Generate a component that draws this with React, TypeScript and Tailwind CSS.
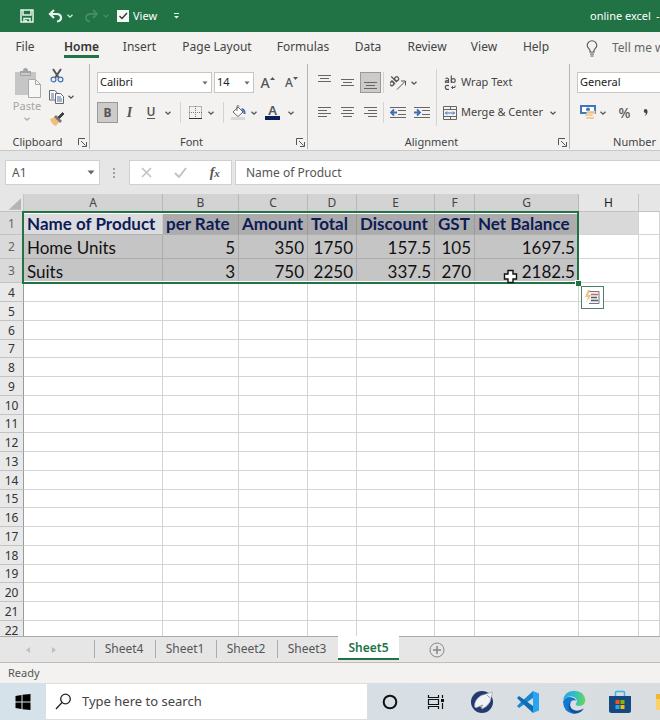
import type { ReactNode } from "react";
import clsx from "clsx";

const TABS = [
  { label: "File", box: "w-[50px]" },
  { label: "Home", box: "w-[63px]" },
  { label: "Insert", box: "w-[53px]" },
  { label: "Page Layout", box: "w-[102px]" },
  { label: "Formulas", box: "w-[70px]" },
  { label: "Data", box: "w-[60px]" },
  { label: "Review", box: "w-[58px]" },
  { label: "View", box: "w-[56px]" },
  { label: "Help", box: "w-[48px]" },
];

const COLUMNS = [
  { name: "A", width: "w-[139px]" },
  { name: "B", width: "w-[76px]" },
  { name: "C", width: "w-[69px]" },
  { name: "D", width: "w-[49px]" },
  { name: "E", width: "w-[78px]" },
  { name: "F", width: "w-[40px]" },
  { name: "G", width: "w-[104px]" },
];

const HEADINGS = ["Name of Product", "per Rate", "Amount", "Total", "Discount", "GST", "Net Balance"];

const PRODUCTS = [
  ["Home Units", "5", "350", "1750", "157.5", "105", "1697.5"],
  ["Suits", "3", "750", "2250", "337.5", "270", "2182.5"],
];

const EMPTY_ROWS = Array.from({ length: 19 }, (_, i) => i + 4);

const SHEETS = ["Sheet4", "Sheet1", "Sheet2", "Sheet3", "Sheet5"];

const ROW_HEAD =
  "border-r border-b border-r-[#9b9b9b] border-b-[#c3c3c3] px-0 pt-px pb-0 text-center font-['Noto_Sans',sans-serif] text-[12px] leading-[14px] font-normal";
const EMPTY_CELL = "border-r border-b border-[#d4d4d4] p-0";

function Chevron({ className = "text-[#555]" }: { className?: string }) {
  return (
    <svg viewBox="0 0 14 8" className={clsx("h-2 w-[14px] shrink-0", className)} fill="none" stroke="currentColor" strokeWidth="1.3">
      <path d="M4.5 2.7 7 5.2l2.5-2.5" />
    </svg>
  );
}

function Lines({ rows }: { rows: [number, number, number][] }) {
  return (
    <svg viewBox="0 0 15 15" className="size-[15px]" stroke="#666" strokeWidth="1">
      {rows.map(([x1, x2, y]) => (
        <path key={y} d={`M${x1} ${y}H${x2}`} />
      ))}
    </svg>
  );
}

function IconButton({ label, active, className = "w-[21px]", children }: { label: string; active?: boolean; className?: string; children: ReactNode }) {
  return (
    <button
      type="button"
      aria-label={label}
      className={clsx(
        "flex h-[21px] shrink-0 items-center justify-center",
        active && "border border-[#999] bg-[#cdcbca]",
        className,
      )}
    >
      {children}
    </button>
  );
}

function Group({ label, launcher = true, className, children }: { label: string; launcher?: boolean; className: string; children: ReactNode }) {
  return (
    <section className={clsx("flex h-[85px] shrink-0 flex-col justify-between border-r border-[#b5b5b5] pt-px", className)}>
      {children}
      <div className="flex h-[14px] items-center">
        <span className="flex-1 text-center text-[11px] leading-[14px]">{label}</span>
        {launcher && (
          <button type="button" aria-label={`${label} settings`} className="flex w-[14px] justify-center">
            <svg viewBox="0 0 9 9" className="size-[9px]" fill="none" stroke="#555">
              <path d="M.5 7V.5H7M3 3l4.500 4.500M8.500 4v4.500H4" />
            </svg>
          </button>
        )}
      </div>
    </section>
  );
}

function Separator() {
  return <span className="block h-[21px] w-px shrink-0 bg-[#d5d3d2]" />;
}

function TitleBar() {
  return (
    <header className="flex h-8 shrink-0 items-center overflow-hidden bg-[#217346] text-[11px] text-white">
      <div className="flex w-[590px] shrink-0 items-center pl-5">
        <button type="button" aria-label="Save" className="w-[28px]">
          <svg viewBox="0 0 14 14" className="size-[14px]" fill="none" stroke="#e8f4ec" strokeWidth="1.500">
            <path d="M1 1h12v12H1zM3 1.500v4.500h8V1.500M4 13V9.500h6V13" />
            <path d="M5 11h2v2H5z" fill="#e8f4ec" stroke="none" />
          </svg>
        </button>
        <button type="button" aria-label="Undo" className="flex w-[36px] items-center">
          <svg viewBox="0 0 15 14" className="h-[14px] w-[15px]" fill="none" stroke="#e8f4ec" strokeWidth="2.200">
            <path d="M6 1 2 5l4 4M2 5h6.500Q13 5 13 8.700 13 12 9 12.500" />
          </svg>
          <Chevron className="text-[#d4e8da]" />
        </button>
        <button type="button" aria-label="Redo" disabled className="flex w-[33px] items-center text-[#458b65]">
          <svg viewBox="0 0 15 14" className="h-[14px] w-[15px]" fill="none" stroke="currentColor" strokeWidth="1.800">
            <path d="m9 1 4 4-4 4M13 5H6.500Q2 5 2 8.700 2 12 6 12.500" />
          </svg>
          <Chevron className="text-[#458b65]" />
        </button>
        <label className="relative flex items-center gap-1">
          <input type="checkbox" defaultChecked className="size-3 appearance-none bg-[#f3faf5]" />
          <svg viewBox="0 0 12 12" className="pointer-events-none absolute left-0 size-3" fill="none" stroke="#333" strokeWidth="1.300">
            <path d="m2.500 6 2.500 2.500 5-5.500" />
          </svg>
          <span>View</span>
        </label>
        <button type="button" aria-label="Customize Quick Access Toolbar" className="ml-4">
          <svg viewBox="0 0 7 8" className="h-2 w-[7px]" fill="#e8f4ec">
            <path d="M1 1h5v1H1zM1 4h5L3.500 6.500z" />
          </svg>
        </button>
      </div>
      <span className="flex gap-[5px] whitespace-nowrap"><span>online excel</span><span>-</span></span>
    </header>
  );
}

function RibbonTabs() {
  return (
    <nav className="flex h-8 shrink-0 items-center overflow-hidden text-[12px] text-[#444]">
      {TABS.map((tab) => (
        <a key={tab.label} href="#" className={clsx("flex h-full shrink-0 flex-col items-center pt-[6px]", tab.box)}>
          <span
            className={clsx(
              "border-b-[3px] leading-[17px]",
              tab.label === "Home" ? "border-[#217346] font-semibold text-[#333]" : "border-transparent",
            )}
          >
            {tab.label}
          </span>
        </a>
      ))}
      <label className="flex shrink-0 items-center pl-[26px]">
        <svg viewBox="0 0 12 17" className="h-[17px] w-3" fill="none" stroke="#555" strokeWidth="1.100">
          <path d="M4 12V10.500C4 9 1.200 8 1.200 5.500a4.800 4.800 0 0 1 9.600 0C10.800 8 8 9 8 10.500V12zM4 14h4M4.500 16h3" />
        </svg>
        <input
          aria-label="Tell me what you want to do"
          placeholder="Tell me what you want to do"
          className="ml-[14px] w-[200px] bg-transparent text-[12px] placeholder-[#666] outline-none"
        />
      </label>
    </nav>
  );
}

function Dropdown({ label, value, className }: { label: string; value: string; className: string }) {
  return (
    <span className={clsx("relative flex h-[21px] shrink-0 items-center", className)}>
      <select aria-label={label} className="size-full appearance-none border border-[#c8c6c4] bg-white pl-[2px] text-[11px] text-[#222]">
        <option>{value}</option>
      </select>
      <svg viewBox="0 0 6 4" className="pointer-events-none absolute right-1 h-1 w-[6px]" fill="#666">
        <path d="M.500.500h5L3 3.500z" />
      </svg>
    </span>
  );
}

function ClipboardGroup() {
  return (
    <Group label="Clipboard" className="w-[90px]">
      <div className="flex pl-[12px]">
        <button type="button" disabled className="flex w-[30px] flex-col items-center pt-[3px] text-[11px] text-[#a5a5a5]">
          <svg viewBox="0 0 27 30" className="h-[30px] w-[27px]">
            <path d="M1 4h21v23H1z" fill="#c6c6c6" />
            <path d="M6 8V3h3Q9 0 11.500 0T14 3h3v5z" fill="#a5a5a5" />
            <path d="M7 6h9" stroke="#eee" />
            <path d="M14.500 11.500h7l5 5v13h-12z" fill="#f7f7f7" stroke="#aaa" />
            <path d="M21.500 11.500v5h5" fill="none" stroke="#aaa" />
          </svg>
          <span className="leading-[15px]">Paste</span>
          <span className="pt-[2px]"><Chevron className="text-[#aaa]" /></span>
        </button>
        <div className="flex flex-col pl-[6px]">
          <IconButton label="Cut" className="w-[18px]">
            <svg viewBox="0 0 14 15" className="h-[15px] w-[14px]" fill="none">
              <path d="M3 1 9 10M11 1 5 10" stroke="#555" strokeWidth="2" />
              <circle cx="3.500" cy="11.500" r="2.400" stroke="#4472b8" strokeWidth="1.200" />
              <circle cx="10.500" cy="11.500" r="2.400" stroke="#4472b8" strokeWidth="1.200" />
            </svg>
          </IconButton>
          <button type="button" aria-label="Copy" className="flex h-[22px] items-center pl-px">
            <svg viewBox="0 0 15 14" className="h-[14px] w-[15px]" fill="#fafafa" stroke="#666">
              <path d="M.500.500h5l2.500 2v7.500H.500z" />
              <path d="M2 4h3M2 6h3M2 8h3" stroke="#4472b8" />
              <path d="M6.500 3.500h5l3 3v7h-8z" />
              <path d="M8 7h4M8 9h5M8 11h5" stroke="#4472b8" />
            </svg>
            <Chevron />
          </button>
          <IconButton label="Format Painter" className="w-[18px]">
            <svg viewBox="0 0 14 14" className="size-[14px]">
              <path d="m0 7 5-2 4 5-3 4q-4-1-6-7z" fill="#f0bd7c" />
              <path d="m4 5 2-2 6 6-2 2z" fill="#777" />
              <path d="m8 5 4.500-4.500 1.500 1.500L9.500 6.500z" fill="#444" stroke="#444" />
            </svg>
          </IconButton>
        </div>
      </div>
    </Group>
  );
}

function FontGroup() {
  return (
    <Group label="Font" className="w-[218px]">
      <div className="flex flex-col gap-[9px] pt-[7px] pl-[7px]">
        <div className="flex gap-[2px]">
          <Dropdown label="Font" value="Calibri" className="w-[115px]" />
          <Dropdown label="Font size" value="14" className="w-[40px]" />
          <IconButton label="Increase Font Size" className="w-[23px]">
            <span className="text-[14px] font-medium text-[#555]">A</span>
            <svg viewBox="0 0 5 12" className="h-3 w-[5px]" fill="#555"><path d="M0 3 2.500 0 5 3z" /></svg>
          </IconButton>
          <IconButton label="Decrease Font Size">
            <span className="text-[12px] font-medium text-[#555]">A</span>
            <svg viewBox="0 0 5 12" className="h-3 w-[5px]" fill="#555"><path d="M0 0h5L2.500 3z" /></svg>
          </IconButton>
        </div>
        <div className="flex items-center text-[#555]">
          <IconButton label="Bold" active><b className="text-[12px]">B</b></IconButton>
          <IconButton label="Italic" className="w-[23px]">
            <i className="font-['Liberation_Serif',serif] text-[14px] font-bold">I</i>
          </IconButton>
          <IconButton label="Underline" className="w-[20px]"><span className="border-b border-[#555] text-[12px] leading-[12px] font-semibold">U</span></IconButton>
          <Chevron />
          <span className="pr-[6px] pl-[5px]"><Separator /></span>
          <IconButton label="Borders" className="w-[17px]">
            <svg viewBox="0 0 13 13" className="size-[13px]" fill="none" stroke="#777">
              <path d="M.500.500h12v12M.500.500v12M6.500 0v12M0 6.500h13" strokeDasharray="1 1" />
              <path d="M0 12.500h13" stroke="#333" />
            </svg>
          </IconButton>
          <Chevron />
          <span className="pr-[6px] pl-[5px]"><Separator /></span>
          <IconButton label="Fill Color" className="w-[17px]">
            <svg viewBox="0 0 15 15" className="size-[15px]" fill="none" stroke="#666">
              <path d="m2 7 5-5 5 5-5 4.500zM6 6V1.500Q6 .500 7 .500T8 1.500" fill="#fff" />
              <path d="M10.500 4q3.500 1 3 5" stroke="#4472b8" strokeWidth="2" />
              <path d="M0 13.500h14" stroke="#d8d8d8" strokeWidth="3" />
            </svg>
          </IconButton>
          <Chevron />
          <IconButton label="Font Color" className="w-[23px]">
            <span className="w-[15px] border-b-4 border-[#0a1f5c] text-center text-[13px] leading-[11px] font-semibold">A</span>
          </IconButton>
          <Chevron />
        </div>
      </div>
    </Group>
  );
}

function AlignmentGroup() {
  return (
    <Group label="Alignment" className="w-[262px]">
      <div className="flex pt-[4px] pl-[6px]">
        <div className="flex w-[122px] flex-col gap-[9px] pt-[3px]">
          <div className="flex gap-[2px]">
            <IconButton label="Top Align"><Lines rows={[[1, 14, 0.5], [3, 12, 3.5], [1, 14, 6.5]]} /></IconButton>
            <IconButton label="Middle Align"><Lines rows={[[1, 14, 4.5], [3, 12, 7.5], [1, 14, 10.5]]} /></IconButton>
            <IconButton label="Bottom Align" active><Lines rows={[[1, 14, 7.5], [3, 12, 10.5], [1, 14, 13.5]]} /></IconButton>
            <Separator />
            <button type="button" aria-label="Orientation" className="flex items-center pl-1">
              <svg viewBox="0 0 17 16" className="h-4 w-[17px]" fill="none" stroke="#555">
                <g transform="rotate(-45 3 11)" strokeWidth="1.300">
                  <circle cx="3.800" cy="8.500" r="2" />
                  <path d="M6 6v5M8.500 3v8" />
                  <circle cx="10.700" cy="8.500" r="2" />
                </g>
                <path d="m7 14.500 8-8M11 6h4.500v4.500" />
              </svg>
              <Chevron />
            </button>
          </div>
          <div className="flex gap-[2px]">
            <IconButton label="Align Left"><Lines rows={[[1, 14, 2.5], [1, 10, 5.5], [1, 14, 8.5], [1, 10, 11.5]]} /></IconButton>
            <IconButton label="Center"><Lines rows={[[1, 14, 2.5], [3, 12, 5.5], [1, 14, 8.5], [3, 12, 11.5]]} /></IconButton>
            <IconButton label="Align Right"><Lines rows={[[1, 14, 2.5], [5, 14, 5.5], [1, 14, 8.5], [5, 14, 11.5]]} /></IconButton>
            <Separator />
            <IconButton label="Decrease Indent" className="w-[23px]">
              <svg viewBox="0 0 16 13" className="h-[13px] w-4" fill="none" stroke="#666">
                <path d="M0 1.500h16M8 4.500h8M8 8.500h8M0 11.500h16" />
                <path d="M7 6.500H1.500M4 3.500l-3 3 3 3" stroke="#3b6fb6" strokeWidth="1.800" />
              </svg>
            </IconButton>
            <IconButton label="Increase Indent">
              <svg viewBox="0 0 16 13" className="h-[13px] w-4" fill="none" stroke="#666">
                <path d="M0 1.500h16M8 4.500h8M8 8.500h8M0 11.500h16" />
                <path d="M0 6.500h5.500M3 3.500l3 3-3 3" stroke="#3b6fb6" strokeWidth="1.800" />
              </svg>
            </IconButton>
          </div>
        </div>
        <div className="flex flex-1 flex-col gap-[9px] border-l border-[#d5d3d2] pt-[3px] pb-[3px] pl-[6px] text-[11px]">
          <button type="button" className="flex h-[21px] items-center gap-1">
            <svg viewBox="0 0 14 16" className="h-4 w-[14px]" fill="none" stroke="#555" strokeWidth="1.200">
              <path d="M2.500 3.600Q5.500 2.500 5.500 4.500V8M5.500 5.500Q2.300 5.300 2.300 6.700T5.500 6.600M8.300 .500V8" />
              <circle cx="10.300" cy="5.600" r="1.900" />
              <path d="M6 10.700Q2.300 9.700 2.300 12.300T6 14.300" />
              <path d="M12 10.500v2H8.500M10 11 8.500 12.500 10 14" strokeWidth="1" />
            </svg>
            Wrap Text
          </button>
          <button type="button" className="flex h-[21px] items-center gap-1">
            <svg viewBox="0 0 14 14" className="size-[14px]" fill="none" stroke="#666">
              <path d="M.500.500h13v13H.500zM0 3.500h14M0 10.500h14M7.500 0v3.500M7.500 10.500V14" />
              <path d="M2.500 7h9M4 5.500 2.500 7 4 8.500M10 5.500 11.500 7 10 8.500" stroke="#3b6fb6" />
            </svg>
            <span className="w-[81px] text-left whitespace-nowrap">Merge &amp; Center</span>
            <Chevron />
          </button>
        </div>
      </div>
    </Group>
  );
}

function NumberGroup() {
  return (
    <Group label="Number" launcher={false} className="w-[130px]">
      <div className="flex flex-col gap-[9px] pt-[7px] pl-[7px]">
        <Dropdown label="Number format" value="General" className="w-[116px]" />
        <div className="flex items-center">
          <button type="button" aria-label="Accounting Number Format" className="flex h-[21px] items-center pl-[3px]">
            <svg viewBox="0 0 16 15" className="h-[15px] w-4">
              <path d="M0 0h16v9H0z" fill="#3b78bd" />
              <path d="M2 2h12v5H2z" fill="#fff" />
              <circle cx="8" cy="4.500" r="2" fill="#3b78bd" />
              <path d="M7 6h8v3H7zM5 9h8v2H5zM6 12h8v2H6z" fill="#f0bd7c" stroke="#f3f2f1" strokeWidth=".500" />
            </svg>
            <Chevron />
          </button>
          <button type="button" className="w-[27px] pl-[2px] text-[14px] leading-5 font-medium text-[#555]">%</button>
          <IconButton label="Comma Style" className="w-[16px]">
            <svg viewBox="0 0 5 8" className="h-2 w-[5px]"><path d="M2.500 0A2 2 0 1 0 3 4Q3 6 1 7q4-1 3.500-5Q4.500 0 2.500 0z" fill="#444" /></svg>
          </IconButton>
        </div>
      </div>
    </Group>
  );
}

function FormulaBar() {
  return (
    <div className="flex h-[44px] shrink-0 items-center border-t border-[#c8c8c8] pl-[5px] text-[12px] text-[#555]">
      <label className="relative flex h-[25px] w-[95px] shrink-0 items-center">
        <input aria-label="Name Box" defaultValue="A1" className="size-full border border-[#d0d0d0] bg-white pl-[6px] outline-none" />
        <svg viewBox="0 0 8 5" className="absolute right-[5px] h-[5px] w-2" fill="#666"><path d="M.500.500h7L4 4.500z" /></svg>
      </label>
      <svg viewBox="0 0 29 10" className="h-[10px] w-[29px] shrink-0" fill="#a0a0a0">
        <path d="M13 0h2v2h-2zM13 4h2v2h-2zM13 8h2v2h-2z" />
      </svg>
      <div className="flex h-[25px] w-[103px] shrink-0 items-center justify-around border border-[#d0d0d0] bg-white">
        <button type="button" aria-label="Cancel">
          <svg viewBox="0 0 11 11" className="size-[11px]" stroke="#c0c0c0" strokeWidth="1.500"><path d="m1 1 9 9M10 1l-9 9" /></svg>
        </button>
        <button type="button" aria-label="Enter">
          <svg viewBox="0 0 13 11" className="h-[11px] w-[13px]" fill="none" stroke="#c0c0c0" strokeWidth="1.800"><path d="m1 6 4 4L12 1" /></svg>
        </button>
        <button type="button" aria-label="Insert Function" className="font-['Liberation_Serif',serif] text-[14px] leading-4 font-bold italic">
          f<span className="text-[11px]">x</span>
        </button>
      </div>
      <input
        aria-label="Formula Bar"
        defaultValue="Name of Product"
        className="ml-[3px] h-[25px] min-w-0 flex-1 border border-r-0 border-[#d0d0d0] bg-white pl-[10px] outline-none"
      />
    </div>
  );
}

function Worksheet() {
  return (
    <main className="relative min-h-0 flex-1 overflow-hidden bg-white">
      <table className="w-full table-fixed border-separate border-spacing-0">
        <thead>
          <tr className="h-[18px] bg-[#d3d3d3] text-[12px] leading-[14px] text-[#444]">
            <th aria-label="Select all" className="w-[24px] border-r border-b border-[#c3c3c3] bg-[#e6e6e6] p-0">
              <svg viewBox="0 0 24 17" className="h-[17px] w-[23px]" fill="#b4b4b4"><path d="M22 4v12H9z" /></svg>
            </th>
            {COLUMNS.map((col) => (
              <th key={col.name} scope="col" className={clsx("border-r border-b border-[#b8b8b8] p-0 font-normal", col.width)}>{col.name}</th>
            ))}
            <th scope="col" className="w-[60px] border-r border-b border-[#c3c3c3] bg-[#e6e6e6] p-0 font-normal text-[#222]">H</th>
            <th className="border-b border-[#c3c3c3] bg-[#e6e6e6] p-0" />
          </tr>
        </thead>
        <tbody className="font-[Lato,sans-serif] text-[17px] leading-5 text-[#111]">
          <tr className="h-[23px]">
            <th scope="row" className={clsx(ROW_HEAD, "bg-[#dadada] text-[#666]")}>1</th>
            {HEADINGS.map((text, i) => (
              <td
                key={text}
                className={clsx(
                  "border-b border-b-[#b0b0b0] px-[3px] pt-[2px] pb-0 font-bold whitespace-nowrap text-[#0d1b57]",
                  i === 0 ? "border-r border-r-[#ccc] bg-[#dcdcdf]" : "border-r border-r-[#999] bg-[#acacac]",
                )}
              >
                {text}
              </td>
            ))}
            <td className="border-r border-b border-[#d4d4d4] bg-[#d9d9d9] p-0" />
            <td className={EMPTY_CELL} />
          </tr>
          {PRODUCTS.map((cells, r) => (
            <tr key={cells[0]} className="h-[24px]">
              <th scope="row" className={clsx(ROW_HEAD, "bg-[#dadada] text-[#666]")}>{r + 2}</th>
              {cells.map((text, i) => (
                <td
                  key={i}
                  className={clsx(
                    "border-r border-b border-[#acacac] bg-[#c6c5c5] px-[3px] pt-[2px] pb-0 whitespace-nowrap",
                    i > 0 && "text-right",
                  )}
                >
                  {text}
                </td>
              ))}
              <td className={EMPTY_CELL} />
              <td className={EMPTY_CELL} />
            </tr>
          ))}
          {EMPTY_ROWS.map((n) => (
            <tr key={n} className={n % 4 === 3 ? "h-[18px]" : "h-[19px]"}>
              <th scope="row" className={clsx(ROW_HEAD, "bg-[#e9e9e9] text-[#333]")}>{n}</th>
              {Array.from({ length: 9 }, (_, i) => (
                <td key={i} className={EMPTY_CELL} />
              ))}
            </tr>
          ))}
        </tbody>
      </table>

      {/* Selection frame, fill handle and quick analysis button */}
      <div className="pointer-events-none absolute top-[17px] left-[22px] h-[73px] w-[557px] border-2 border-[#217346]">
        <div className="size-full border-y border-white" />
        <span className="absolute -right-1 -bottom-1 size-[6px] border-t border-l border-white bg-[#217346]" />
      </div>
      <button type="button" aria-label="Quick Analysis" className="absolute top-[92px] left-[581px] flex size-[23px] items-center justify-center border border-[#4e8266] bg-white">
        <svg viewBox="0 0 15 15" className="size-[15px]" fill="none">
          <path d="M4 1.500h10v12H4" stroke="#777" fill="#f2f2f2" />
          <path d="M6 4.500h7" stroke="#cf6a5c" strokeWidth="1.500" />
          <path d="M6 7.500h6M6 10.500h7" stroke="#4d6273" strokeWidth="1.500" />
          <path d="M3 0 0 7h3l-2 6 5-8H3l2-5z" fill="#efc08a" />
        </svg>
      </button>
      <svg viewBox="0 0 15 15" className="pointer-events-none absolute top-[75px] left-[503px] size-[15px]">
        <path d="M5 1.500h5V5h3.500v5H10v3.500H5V10H1.500V5H5z" fill="#fff" stroke="#111" strokeWidth="1.400" />
      </svg>
    </main>
  );
}

function SheetTabs() {
  return (
    <nav className="flex h-[27px] shrink-0 border-t border-b border-t-[#ababab] border-b-[#bdbdbd] bg-[#e6e6e6] text-[12px] text-[#555]">
      <div className="flex w-[94px] shrink-0 items-center pl-[26px]">
        <svg viewBox="0 0 32 6" className="h-[6px] w-8" fill="#c0c0c0"><path d="M4 0v6L0 3zM26 0v6l4-3z" /></svg>
      </div>
      {SHEETS.map((name) => (
        <a
          key={name}
          href="#"
          className={clsx(
            "flex w-[61px] items-center justify-center",
            name === "Sheet5"
              ? "-mt-px h-[24px] border-b-2 border-[#217346] bg-white pt-[2px] font-semibold text-[#217346]"
              : "my-[3px] h-[18px] border-l border-[#ababab] pr-[2px]",
          )}
        >
          {name}
        </a>
      ))}
      <button type="button" aria-label="New sheet" className="ml-[30px]">
        <svg viewBox="0 0 16 16" className="size-4" fill="none" stroke="#888"><circle cx="8" cy="8" r="7" /><path d="M4 8h8M8 4v8" strokeWidth="1.500" /></svg>
      </button>
    </nav>
  );
}

function TaskIcon({ label, children }: { label: string; children: ReactNode }) {
  return (
    <button type="button" aria-label={label} className="flex w-[46px] shrink-0 items-center justify-center">
      <svg viewBox="0 0 24 24" className="size-6" fill="none">{children}</svg>
    </button>
  );
}

function Taskbar() {
  return (
    <footer className="flex h-[37px] shrink-0 overflow-hidden bg-linear-to-r from-[#d6e2ea] to-[#d9dde0]">
      <TaskIcon label="Start">
        <path d="m4.500 6 6-1v6.500h-6zM11.500 4.800 19.500 4v7.500h-8zM4.500 12.500h6V19l-6-1zM11.500 12.500h8V20l-8-.800z" fill="#000" />
      </TaskIcon>
      <label className="flex w-[321px] shrink-0 items-center border-y border-[#ddd] bg-white pl-[9px]">
        <svg viewBox="0 0 17 17" className="size-[17px]" fill="none" stroke="#222" strokeWidth="1.300">
          <circle cx="10.500" cy="6" r="4.800" /><path d="m7 9.500-6 6.500" />
        </svg>
        <input aria-label="Search" placeholder="Type here to search" className="ml-[10px] min-w-0 flex-1 text-[13px] placeholder-[#444] outline-none" />
      </label>
      <TaskIcon label="Cortana"><circle cx="12" cy="12" r="6.300" stroke="#111" strokeWidth="2" /></TaskIcon>
      <TaskIcon label="Task View">
        <path d="M4.500 5v2.500h10V5M4.500 19v-2.500h10V19M4.500 9.500h10v5h-10zM18.500 5v3M18.500 13v6" stroke="#111" strokeWidth="1.200" />
        <path d="M17 9h3v3h-3z" fill="#111" />
      </TaskIcon>
      <TaskIcon label="Browser">
        <circle cx="12" cy="12" r="11" fill="#233a6e" />
        <path d="M4.500 17Q4 10 11 5.500L22.500 2 20 12q-3 5-8 7 0-3-3-2.500-2.500 2-4.500.500z" fill="#f0f2f4" stroke="#8e97a5" strokeWidth=".600" />
        <path d="m9 16.500 4-1.500M12 15l-.500 4M17 5l3 3" stroke="#8892a2" strokeWidth=".900" />
      </TaskIcon>
      <TaskIcon label="Visual Studio Code">
        <path d="M17 1 4 13 1 16l2 2L17 8z" fill="#1b87d2" />
        <path d="M17 23 4 11 1 8l2-2L17 16z" fill="#0f6db5" />
        <path d="m17 1 6 2.500v17L17 23z" fill="#28a5ee" />
      </TaskIcon>
      <TaskIcon label="Microsoft Edge">
        <defs>
          <linearGradient id="edge-top" x1="2" y1="8" x2="23" y2="10" gradientUnits="userSpaceOnUse">
            <stop stopColor="#2aa9e0" /><stop offset=".500" stopColor="#31c0c4" /><stop offset="1" stopColor="#67d65a" />
          </linearGradient>
        </defs>
        <path d="M1 11Q2 1 12 .700 22.500 1 23.300 10q0 5.500-6 6-4 0-3.500-2.500 1.500-1 1-3Q14 7 10 6.500 4 6 1 11z" fill="url(#edge-top)" />
        <path d="M1 11.500Q4 6.500 9 7.200q4 .500 5 3.300-6-1-6 5 1 6 6 8-2 .500-4 0-8.500-2-9-12z" fill="#1477cf" />
        <path d="M8.500 12.500Q7 16 10 19q5 3.500 12-.500-3.500 5-9 5-6.500-1.500-6.500-7Q7 13.500 8.500 12.500z" fill="#114f9b" />
      </TaskIcon>
      <TaskIcon label="Microsoft Store">
        <path d="M7.500 6V2.500Q7.500 1.500 8.500 1.500h7q1 0 1 1V6" stroke="#36b3e8" strokeWidth="1.500" />
        <path d="M1 6h22v14.500q0 2.500-2.500 2.500h-17Q1 23 1 20.500z" fill="#154a80" />
        <path d="M7.500 10h4v4h-4z" fill="#f25022" /><path d="M12.500 10h4v4h-4z" fill="#7fba00" />
        <path d="M7.500 15h4v4h-4z" fill="#28a8ea" /><path d="M12.500 15h4v4h-4z" fill="#ffb900" />
      </TaskIcon>
      <TaskIcon label="File Explorer">
        <path d="M2 4h8l2 3h10v13H2z" fill="#f3b72f" /><path d="M2 9h20v11H2z" fill="#fbd267" />
      </TaskIcon>
    </footer>
  );
}

export default function App() {
  return (
    <div className="flex h-screen flex-col overflow-hidden bg-[#e6e6e6] font-['Noto_Sans',sans-serif] text-[#444]">
      <TitleBar />
      <div className="shrink-0 bg-[#f3f2f1]">
        <RibbonTabs />
        <div className="flex h-[86px] overflow-hidden">
          <ClipboardGroup />
          <FontGroup />
          <AlignmentGroup />
          <NumberGroup />
        </div>
      </div>
      <FormulaBar />
      <Worksheet />
      <SheetTabs />
      <div className="flex h-[20px] shrink-0 items-center bg-[#f3f2f1] pl-2 text-[11px] text-[#555]">Ready</div>
      <Taskbar />
    </div>
  );
}
